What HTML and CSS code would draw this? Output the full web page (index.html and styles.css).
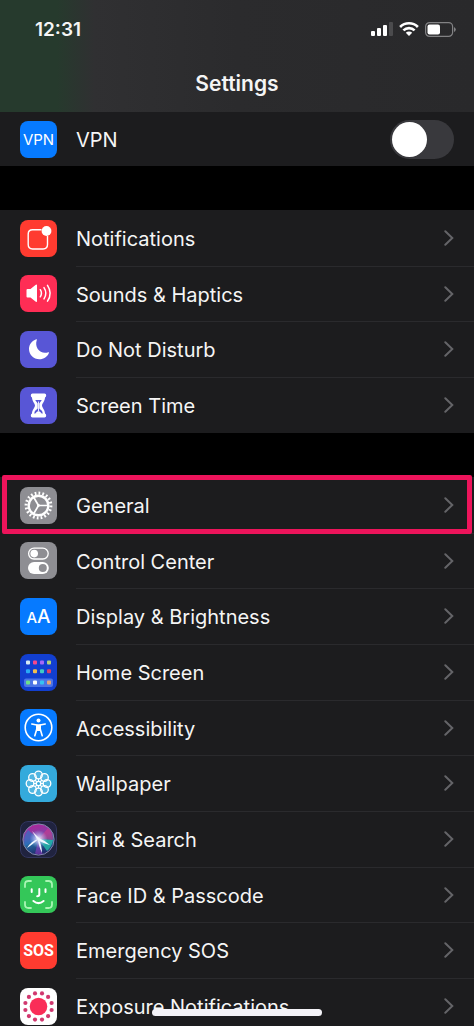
FILE: index.html
```html
<!DOCTYPE html>
<html lang="en">
<head>
  <meta charset="UTF-8" />
  <meta name="viewport" content="width=device-width, initial-scale=1.0"/>
  <title>Settings</title>
  <link rel="stylesheet" href="styles.css">
</head>
<body>
  <div class="screen">
    <header>
      <div class="status-bar">
        <time>12:31</time>
        <div class="status-icons">
          <svg width="22" height="14" viewBox="0 0 22 14" fill="#fff">
            <rect x="0" y="9" width="4" height="5" rx="1"/>
            <rect x="6" y="6" width="4" height="8" rx="1"/>
            <rect x="12" y="3" width="4" height="11" rx="1"/>
            <rect x="18" y="0" width="4" height="14" rx="1" fill="#4b4b4d"/>
          </svg>
          <svg width="20" height="14" viewBox="0 0 20 14" fill="none" stroke="#fff" stroke-width="2.6">
            <path d="M1.1 5 A12.6 12.6 0 0 1 18.9 5"/>
            <path d="M4.4 8.4 A8 8 0 0 1 15.6 8.4"/>
            <path d="M10 14 L6.8 10.7 A4.6 4.6 0 0 1 13.2 10.7 Z" fill="#fff" stroke="none"/>
          </svg>
          <svg width="31" height="15" viewBox="0 0 31 15">
            <rect x=".6" y=".6" width="27" height="13.8" rx="4" fill="none" stroke="#828284" stroke-width="1.2"/>
            <rect x="2.5" y="2.5" width="12.5" height="10" rx="2" fill="#fff"/>
            <path d="M29 5 Q30.8 6 30.8 7.5 Q30.8 9 29 10 Z" fill="#828284"/>
          </svg>
        </div>
      </div>
      <h1>Settings</h1>
    </header>

    <main>
      <ul class="group">
        <li class="vpn">
          <label class="row" for="vpn-switch">
            <span class="icon blue vpn-text" aria-hidden="true">VPN</span>
            <span class="label">VPN</span>
            <input class="switch" type="checkbox" id="vpn-switch">
          </label>
        </li>
      </ul>

      <ul class="group">
        <li>
          <a class="row" href="#notifications">
            <svg class="icon red" viewBox="0 0 37 37">
              <path d="M21.5 9.7 H12.6 Q8.2 9.7 8.2 14.1 V24.6 Q8.2 29 12.6 29 H23.1 Q27.5 29 27.5 24.6 V16" fill="none" stroke="#fff" stroke-width="1.4"/>
              <circle cx="26.5" cy="11" r="4.9" fill="#fff"/>
            </svg>
            <span class="label">Notifications</span>
            <svg class="chevron" viewBox="0 0 10 16"><path d="M1.3 1.3 L8.3 8 L1.3 14.7"/></svg>
          </a>
        </li>
        <li>
          <a class="row" href="#sounds">
            <svg class="icon pink" viewBox="0 0 37 37">
              <path d="M6.5 15 Q6.5 14 7.5 14 H10.5 L15.8 9.8 Q17 9 17 10.5 V26 Q17 27.5 15.8 26.7 L10.5 22.5 H7.5 Q6.5 22.5 6.5 21.5 Z" fill="#fff"/>
              <path d="M20.3 14.7 Q22.6 18.2 20.3 21.8 M24 12.6 Q27.7 18.2 24 23.9 M27.5 10.3 Q32.8 18.2 27.5 26.2" fill="none" stroke="#fff" stroke-width="1.5" stroke-linecap="round"/>
            </svg>
            <span class="label">Sounds &amp; Haptics</span>
            <svg class="chevron" viewBox="0 0 10 16"><path d="M1.3 1.3 L8.3 8 L1.3 14.7"/></svg>
          </a>
        </li>
        <li>
          <a class="row" href="#dnd">
            <svg class="icon indigo" viewBox="0 0 37 37">
              <path d="M16.3 8.2 C12 9.6 9 13.5 9 18 C9 23.8 13.6 28.3 19.4 28.3 C23.8 28.3 27.5 25.7 29 21.8 C29.2 21.2 28.8 21 28.3 21.2 C21 24 14 17 16.8 9 C17.1 8.3 16.9 8 16.3 8.2 Z" fill="#fff"/>
            </svg>
            <span class="label">Do Not Disturb</span>
            <svg class="chevron" viewBox="0 0 10 16"><path d="M1.3 1.3 L8.3 8 L1.3 14.7"/></svg>
          </a>
        </li>
        <li>
          <a class="row" href="#screen-time">
            <svg class="icon indigo" viewBox="0 0 37 37">
              <path d="M12.5 6.5 H24.5 Q26.2 6.5 26.2 8.2 Q26.2 10 25 10.4 C25 14 22 16.5 22 18.5 C22 20.5 25 23 25 26.6 Q26.2 27 26.2 28.8 Q26.2 30.5 24.5 30.5 H12.5 Q10.8 30.5 10.8 28.8 Q10.8 27 12 26.6 C12 23 15 20.5 15 18.5 C15 16.5 12 14 12 10.4 Q10.8 10 10.8 8.2 Q10.8 6.5 12.5 6.5 Z" fill="#fff"/>
              <path d="M15.2 13 H21.8 L19.3 16.5 V21.5 Q22.6 23.5 22.8 26.6 H14.2 Q14.4 23.5 17.7 21.5 V16.5 Z" fill="#5856d6"/>
              <path d="M18.5 14.5 V24 M15.8 26.6 Q18.5 22.5 21.2 26.6 Z" fill="#fff" stroke="#fff" stroke-width=".9"/>
            </svg>
            <span class="label">Screen Time</span>
            <svg class="chevron" viewBox="0 0 10 16"><path d="M1.3 1.3 L8.3 8 L1.3 14.7"/></svg>
          </a>
        </li>
      </ul>

      <ul class="group">
        <li class="highlight">
          <a class="row" href="#general">
            <svg class="icon gray" viewBox="0 0 37 37" fill="none" stroke="#fff">
              <circle cx="18.5" cy="18.5" r="12.4" pathLength="80" stroke-width="3" stroke-dasharray="1.8 2.2"/>
              <circle cx="18.5" cy="18.5" r="9.8" stroke-width="2.4"/>
              <path d="M18.5 18.5 H28 M18.5 18.5 L13.7 10.2 M18.5 18.5 L13.7 26.8" stroke-width="1.7"/>
              <circle cx="18.5" cy="18.5" r="1.4" fill="#fff" stroke="none"/>
            </svg>
            <span class="label">General</span>
            <svg class="chevron" viewBox="0 0 10 16"><path d="M1.3 1.3 L8.3 8 L1.3 14.7"/></svg>
          </a>
        </li>
        <li>
          <a class="row" href="#control-center">
            <svg class="icon gray" viewBox="0 0 37 37">
              <rect x="8.6" y="6.2" width="19.6" height="10.8" rx="5.4" fill="none" stroke="#fff" stroke-width="1.3"/>
              <circle cx="14.2" cy="11.6" r="3.8" fill="#fff"/>
              <rect x="8" y="20" width="20.8" height="12" rx="6" fill="#fff"/>
              <circle cx="22.8" cy="26" r="4" fill="#8e8e93"/>
            </svg>
            <span class="label">Control Center</span>
            <svg class="chevron" viewBox="0 0 10 16"><path d="M1.3 1.3 L8.3 8 L1.3 14.7"/></svg>
          </a>
        </li>
        <li>
          <a class="row" href="#display">
            <span class="icon blue aa-text" aria-hidden="true"><small>A</small>A</span>
            <span class="label">Display &amp; Brightness</span>
            <svg class="chevron" viewBox="0 0 10 16"><path d="M1.3 1.3 L8.3 8 L1.3 14.7"/></svg>
          </a>
        </li>
        <li>
          <a class="row" href="#home-screen">
            <svg class="icon navy" viewBox="0 0 37 37">
              <rect x="4" y="24.5" width="29" height="8.5" rx="2" fill="#4c74e6"/>
              <rect x="6" y="6.5" width="4" height="4" rx="1" fill="#d5e9f5"/>
              <rect x="13" y="6.5" width="4" height="4" rx="1" fill="#f5488a"/>
              <rect x="20" y="6.5" width="4" height="4" rx="1" fill="#a568f5"/>
              <rect x="27" y="6.5" width="4" height="4" rx="1" fill="#b3d37a"/>
              <rect x="6" y="15.2" width="4" height="4" rx="1" fill="#28a9f7"/>
              <rect x="13" y="15.2" width="4" height="4" rx="1" fill="#f3bf4e"/>
              <rect x="20" y="15.2" width="4" height="4" rx="1" fill="#41cbc4"/>
              <rect x="27" y="15.2" width="4" height="4" rx="1" fill="#dc4169"/>
              <rect x="6" y="26.5" width="4" height="4" rx="1" fill="#6be08a"/>
              <rect x="13" y="26.5" width="4" height="4" rx="1" fill="#fff"/>
              <rect x="20" y="26.5" width="4" height="4" rx="1" fill="#35c3f2"/>
              <rect x="27" y="26.5" width="4" height="4" rx="1" fill="#e5a57a"/>
            </svg>
            <span class="label">Home Screen</span>
            <svg class="chevron" viewBox="0 0 10 16"><path d="M1.3 1.3 L8.3 8 L1.3 14.7"/></svg>
          </a>
        </li>
        <li>
          <a class="row" href="#accessibility">
            <svg class="icon blue" viewBox="0 0 37 37">
              <circle cx="18.5" cy="18.5" r="13.3" fill="none" stroke="#fff" stroke-width="1.6"/>
              <circle cx="18.5" cy="11.6" r="2" fill="#fff"/>
              <path d="M11.8 15 L16.8 16 V20 L14.8 26.8 M25.2 15 L20.2 16 V20 L22.2 26.8" fill="none" stroke="#fff" stroke-width="1.6" stroke-linecap="round" stroke-linejoin="round"/>
              <path d="M16.2 15.2 H20.8 V20 L20 22 H17 L16.2 20 Z" fill="#fff"/>
            </svg>
            <span class="label">Accessibility</span>
            <svg class="chevron" viewBox="0 0 10 16"><path d="M1.3 1.3 L8.3 8 L1.3 14.7"/></svg>
          </a>
        </li>
        <li>
          <a class="row" href="#wallpaper">
            <svg class="icon cyan" viewBox="0 0 37 37" fill="#ffffff26" stroke="#fff" stroke-width="1.3">
              <circle cx="18.5" cy="10" r="3.8"/>
              <circle cx="24.5" cy="12.5" r="3.8"/>
              <circle cx="27" cy="18.5" r="3.8"/>
              <circle cx="24.5" cy="24.5" r="3.8"/>
              <circle cx="18.5" cy="27" r="3.8"/>
              <circle cx="12.5" cy="24.5" r="3.8"/>
              <circle cx="10" cy="18.5" r="3.8"/>
              <circle cx="12.5" cy="12.5" r="3.8"/>
              <path d="M18.5 13.8 V23.2 M13.8 18.5 H23.2 M15.2 15.2 L21.8 21.8 M21.8 15.2 L15.2 21.8"/>
              <circle cx="18.5" cy="18.5" r="2.2" fill="#34aadc"/>
            </svg>
            <span class="label">Wallpaper</span>
            <svg class="chevron" viewBox="0 0 10 16"><path d="M1.3 1.3 L8.3 8 L1.3 14.7"/></svg>
          </a>
        </li>
        <li>
          <a class="row" href="#siri">
            <svg class="icon siri" viewBox="0 0 37 37">
              <defs>
                <linearGradient id="siri-orb" x1=".35" y1="0" x2=".6" y2="1">
                  <stop offset="0" stop-color="#b0249a"/>
                  <stop offset=".4" stop-color="#7a45a8"/>
                  <stop offset=".6" stop-color="#2567a0"/>
                  <stop offset="1" stop-color="#1c1f5e"/>
                </linearGradient>
                <radialGradient id="siri-glow">
                  <stop offset="0" stop-color="#fff"/>
                  <stop offset=".35" stop-color="#d8d4fa" stop-opacity=".7"/>
                  <stop offset="1" stop-color="#9fb8f5" stop-opacity="0"/>
                </radialGradient>
              </defs>
              <rect x=".5" y=".5" width="36" height="36" rx="7.5" fill="none" stroke="#33365e"/>
              <circle cx="18.5" cy="18.5" r="15.6" fill="url(#siri-orb)" stroke="#8389ac" stroke-width="1"/>
              <path d="M18.5 18 L5 25 Q2.5 16 8 9 Z" fill="#2678c8" opacity=".6"/>
              <path d="M18.5 18 L28 7 Q33 12 33 19 Z" fill="#d03a8c" opacity=".6"/>
              <path d="M18.5 18 L33 19 Q32 26 27 30 Z" fill="#25c5ad" opacity=".75"/>
              <path d="M18.5 18 L22.5 33 Q19 34 15 32.5 Z" fill="#a23bd0" opacity=".5"/>
              <circle cx="18.5" cy="18" r="9" fill="url(#siri-glow)"/>
              <path d="M7 27 Q11 20 18.5 18 Q12 24 7 27 Z M18.5 17 Q24 19 30 24 Q22 22 18.5 19 Z M18 17 Q22 24 22 32 Q18 24 18 17 Z M12 10 L20 18 L17 18 Z" fill="#eef6ff"/>
            </svg>
            <span class="label">Siri &amp; Search</span>
            <svg class="chevron" viewBox="0 0 10 16"><path d="M1.3 1.3 L8.3 8 L1.3 14.7"/></svg>
          </a>
        </li>
        <li>
          <a class="row" href="#face-id">
            <svg class="icon green" viewBox="0 0 37 37" fill="none" stroke-linecap="round">
              <path d="M5 11 V8.5 Q5 5 8.5 5 H11 M26 5 H28.5 Q32 5 32 8.5 V11 M32 26 V28.5 Q32 32 28.5 32 H26 M11 32 H8.5 Q5 32 5 28.5 V26" stroke="#a9f5b4" stroke-width="1.8"/>
              <path d="M11.7 13.3 V16 M25.5 13.3 V16 M19.3 13 V18.6 Q19.3 20.3 17.2 20.3 M13.4 25 Q18.5 29.3 23.6 25" stroke="#fff" stroke-width="2"/>
            </svg>
            <span class="label">Face ID &amp; Passcode</span>
            <svg class="chevron" viewBox="0 0 10 16"><path d="M1.3 1.3 L8.3 8 L1.3 14.7"/></svg>
          </a>
        </li>
        <li>
          <a class="row" href="#sos">
            <span class="icon red sos-text" aria-hidden="true">SOS</span>
            <span class="label">Emergency SOS</span>
            <svg class="chevron" viewBox="0 0 10 16"><path d="M1.3 1.3 L8.3 8 L1.3 14.7"/></svg>
          </a>
        </li>
        <li>
          <a class="row" href="#exposure">
            <svg class="icon white" viewBox="0 0 37 37" fill="#d1386f">
              <circle cx="18.5" cy="18.5" r="8.8" fill="#fa2d58"/>
              <circle cx="22" cy="5.4" r="2.1"/>
              <circle cx="28.1" cy="8.9" r="2.1"/>
              <circle cx="31.6" cy="15" r="2.1"/>
              <circle cx="31.6" cy="22" r="2.1"/>
              <circle cx="28.1" cy="28.1" r="2.1"/>
              <circle cx="22" cy="31.6" r="2.1"/>
              <circle cx="15" cy="31.6" r="2.1"/>
              <circle cx="8.9" cy="28.1" r="2.1"/>
              <circle cx="5.4" cy="22" r="2.1"/>
              <circle cx="5.4" cy="15" r="2.1"/>
              <circle cx="8.9" cy="8.9" r="2.1"/>
              <circle cx="15" cy="5.4" r="2.1"/>
            </svg>
            <span class="label">Exposure Notifications</span>
            <svg class="chevron" viewBox="0 0 10 16"><path d="M1.3 1.3 L8.3 8 L1.3 14.7"/></svg>
          </a>
        </li>
      </ul>
    </main>
    <div class="home-indicator"></div>
  </div>
</body>
</html>
```
FILE: styles.css
```css
* { box-sizing: border-box; }

body {
  margin: 0;
  font-family: Inter, "Liberation Sans", sans-serif;
  background: #000;
  color: #f5f5f5;
}

.screen {
  display: flex;
  flex-direction: column;
  height: 100vh;
  overflow: hidden;
}

header {
  flex-shrink: 0;
  padding: 16px 18px 14px 35px;
  background: linear-gradient(90deg, #263a2d 0, #263a2d 12%, #303032 20%, #2b2b2d 50%, #29292b 100%);
}

.status-bar {
  display: flex;
  align-items: center;
  justify-content: space-between;
  height: 26px;
}

.status-bar time {
  font-size: 19px;
  font-weight: 600;
}

.status-icons {
  display: flex;
  align-items: center;
  gap: 6px;
}

h1 {
  margin: 28px 17px 0 0;
  font-size: 21px;
  line-height: 28px;
  font-weight: 600;
  text-align: center;
}

main {
  flex: 1;
  min-height: 0;
  overflow-y: auto;
  scrollbar-width: none;
}

.group {
  margin: 0 0 44px;
  padding: 0;
  list-style: none;
  background: #1c1c1e;
}

.group li {
  position: relative;
}

.row {
  display: flex;
  align-items: center;
  min-height: 56px;
  padding: 0 20px;
  color: inherit;
  text-decoration: none;
}

.group li:nth-child(3n+2) .row {
  min-height: 55px;
}

.group .vpn .row {
  min-height: 54px;
}

/* separator starts under the label, not under the icon */
.group li + li::before {
  content: "";
  position: absolute;
  top: 0;
  left: 76px;
  right: 0;
  height: 1px;
  background: #2a2a2d;
}

.icon {
  display: flex;
  flex-shrink: 0;
  align-items: center;
  justify-content: center;
  width: 37px;
  height: 37px;
  margin-right: 19px;
  border-radius: 8px;
  color: #fff;
}

.blue { background: #067aff; }
.red { background: #ff3b30; }
.pink { background: #ff2d55; }
.indigo { background: #5856d6; }
.gray { background: #8e8e93; }
.navy { background: #123fd0; }
.cyan { background: #34aadc; }
.green { background: #34c759; }
.white { background: #fff; }
.siri { background: #20233f; }

.vpn-text { font-size: 15px; }
.sos-text {
  font-family: Roboto, sans-serif;
  font-size: 16px;
  font-weight: 700;
}
.aa-text {
  align-items: baseline;
  font-size: 19px;
  font-weight: 500;
  line-height: 37px;
}
.aa-text small { font-size: 15px; }

.label {
  flex: 1;
  padding-top: 2px;
  font-size: 20px;
  line-height: 28px;
}

.chevron {
  width: 10px;
  height: 16px;
  fill: none;
  stroke: #646468;
  stroke-width: 2;
  stroke-linecap: round;
}

.switch {
  appearance: none;
  width: 64px;
  height: 39px;
  margin: 0;
  padding: 2px;
  border-radius: 20px;
  background: #39393d;
}

.switch::before {
  content: "";
  display: block;
  width: 35px;
  height: 35px;
  border-radius: 50%;
  background: #fff;
}

.switch:checked { background: #34c759; }
.switch:checked::before { margin-left: auto; }

.highlight::after {
  content: "";
  position: absolute;
  inset: -2px 2px -1px;
  z-index: 1;
  border: 5px solid #ed145b;
  border-radius: 2px;
  pointer-events: none;
}

.home-indicator {
  position: fixed;
  bottom: 10px;
  left: 50%;
  width: 170px;
  height: 7px;
  margin-left: -85px;
  border-radius: 4px;
  background: #f3f2f7;
}
```
